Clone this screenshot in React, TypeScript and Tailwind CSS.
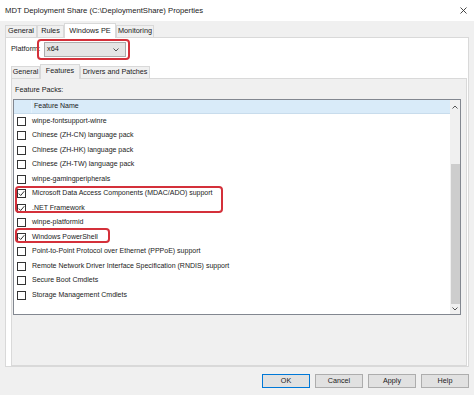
import React from 'react';

const features = [
  { name: 'winpe-fontsupport-winre', checked: false },
  { name: 'Chinese (ZH-CN) language pack', checked: false },
  { name: 'Chinese (ZH-HK) language pack', checked: false },
  { name: 'Chinese (ZH-TW) language pack', checked: false },
  { name: 'winpe-gamingperipherals', checked: false },
  { name: 'Microsoft Data Access Components (MDAC/ADO) support', checked: true },
  { name: '.NET Framework', checked: true },
  { name: 'winpe-platformid', checked: false },
  { name: 'Windows PowerShell', checked: true },
  { name: 'Point-to-Point Protocol over Ethernet (PPPoE) support', checked: false },
  { name: 'Remote Network Driver Interface Specification (RNDIS) support', checked: false },
  { name: 'Secure Boot Cmdlets', checked: false },
  { name: 'Storage Management Cmdlets', checked: false },
];

function Chevron({ up = false }: { up?: boolean }) {
  return (
    <svg width="6" height="4" viewBox="0 0 6 4">
      <path d={up ? 'M0.5 3.5 L3 1 L5.5 3.5' : 'M0.5 0.5 L3 3 L5.5 0.5'} fill="none" stroke="#555" strokeWidth="1" />
    </svg>
  );
}

function CheckBox({ checked }: { checked: boolean }) {
  return (
    <div className="w-[9px] h-[9px] border border-[#333] bg-white flex items-center justify-center">
      {checked && (
        <svg width="7" height="7" viewBox="0 0 7 7">
          <path d="M0.8 3.6 L2.7 5.5 L6.3 1.2" fill="none" stroke="#333" strokeWidth="1" />
        </svg>
      )}
    </div>
  );
}

function Tab({ label, w, active = false, activeBg }: { label: string; w: string; active?: boolean; activeBg: string }) {
  return active ? (
    <div className={`${w} h-[15px] ${activeBg} border border-b-0 border-[#d9d9d9] flex items-center justify-center whitespace-nowrap relative z-10 -mb-px`}>
      {label}
    </div>
  ) : (
    <div className={`${w} h-[12px] bg-[#f0f0f0] border border-b-0 border-[#d9d9d9] flex items-center justify-center whitespace-nowrap`}>
      {label}
    </div>
  );
}

function Button({ label, primary = false }: { label: string; primary?: boolean }) {
  return (
    <div
      className={`w-[48px] h-[14px] flex items-center justify-center bg-[#e1e1e1] text-[7.2px] ${
        primary ? 'border border-[#0078d7]' : 'border border-[#adadad]'
      }`}
    >
      {label}
    </div>
  );
}

export default function App() {
  return (
    <div
      className="w-[474px] h-[395px] bg-[#f0f0f0] relative overflow-hidden text-[#1a1a1a]"
      style={{ fontFamily: '"Liberation Sans", Arial, sans-serif' }}
    >
      {/* title bar */}
      <div className="h-[21px] bg-white flex items-center justify-between pl-[5px] pr-[7px] text-[7.7px]">
        <span>MDT Deployment Share (C:\DeploymentShare) Properties</span>
        <svg width="7" height="7" viewBox="0 0 7 7">
          <path d="M0.5 0.5 L6.5 6.5 M6.5 0.5 L0.5 6.5" stroke="#333" strokeWidth="0.9" />
        </svg>
      </div>

      {/* outer tabs */}
      <div className="flex items-end pl-[5px] mt-[2px] text-[7.3px]">
        <Tab label="General" w="w-[32px]" activeBg="bg-white" />
        <Tab label="Rules" w="w-[27px]" activeBg="bg-white" />
        <Tab label="Windows PE" w="w-[52px]" activeBg="bg-white" active />
        <Tab label="Monitoring" w="w-[38px]" activeBg="bg-white" />
      </div>

      {/* outer panel */}
      <div className="ml-[5px] w-[464px] h-[330px] bg-white border border-[#d9d9d9] flex flex-col">
        {/* platform */}
        <div className="flex items-center h-[24px] pl-[5px] text-[7.3px]">
          <span className="w-[33px]">Platform:</span>
          <div className="w-[82px] h-[15px] bg-[#e5e5e5] border border-[#adadad] flex items-center justify-between pl-[2px] pr-[6px]">
            <span>x64</span>
            <Chevron />
          </div>
        </div>

        {/* inner tabs */}
        <div className="flex items-end pl-[5px] mt-[2px] text-[7.2px]">
          <Tab label="General" w="w-[29px]" activeBg="bg-[#f0f0f0]" />
          <Tab label="Features" w="w-[40px]" activeBg="bg-[#f0f0f0]" active />
          <Tab label="Drivers and Patches" w="w-[70px]" activeBg="bg-[#f0f0f0]" />
        </div>

        {/* inner panel */}
        <div className="ml-[5px] w-[456px] h-[291px] bg-[#f0f0f0] border border-[#d9d9d9] flex flex-col">
          <div className="h-[20px] flex items-end pl-[3px] pb-[3px] text-[7.2px]">Feature Packs:</div>
          <div className="ml-px w-[448px] h-[216px] border border-[#828790] bg-white flex">
            <div className="flex-1 flex flex-col text-[7px]">
              <div className="h-[14px] bg-[#d9ebf9] border-b border-[#c8dcec] flex items-center">
                <div className="w-[18px] h-full border-r border-[#e5f1fb]" />
                <span className="pl-[2px]">Feature Name</span>
              </div>
              {features.map((f) => (
                <div key={f.name} className="h-[14.5px] flex items-center pl-[3px] gap-[6px] whitespace-nowrap">
                  <CheckBox checked={f.checked} />
                  <span>{f.name}</span>
                </div>
              ))}
            </div>
            {/* scrollbar */}
            <div className="w-[10px] bg-[#f0f0f0] flex flex-col items-center">
              <div className="h-[14px] flex items-center justify-center">
                <Chevron up />
              </div>
              <div className="h-[50px]" />
              <div className="w-[9px] flex-1 bg-[#cdcdcd]" />
              <div className="h-[10px] flex items-center justify-center">
                <Chevron />
              </div>
            </div>
          </div>
        </div>
      </div>

      {/* footer buttons */}
      <div className="flex justify-end gap-[5px] pr-[5px] mt-[7px]">
        <Button label="OK" primary />
        <Button label="Cancel" />
        <Button label="Apply" />
        <Button label="Help" />
      </div>

      {/* red annotation boxes */}
      <div className="absolute left-[37px] top-[39px] w-[93px] h-[21px] border-2 border-[#d4303a] rounded-[4px]" />
      <div className="absolute left-[15px] top-[186px] w-[208px] h-[27px] border-2 border-[#d4303a] rounded-[4px]" />
      <div className="absolute left-[15px] top-[228px] w-[95px] h-[15px] border-2 border-[#d4303a] rounded-[4px]" />
    </div>
  );
}
